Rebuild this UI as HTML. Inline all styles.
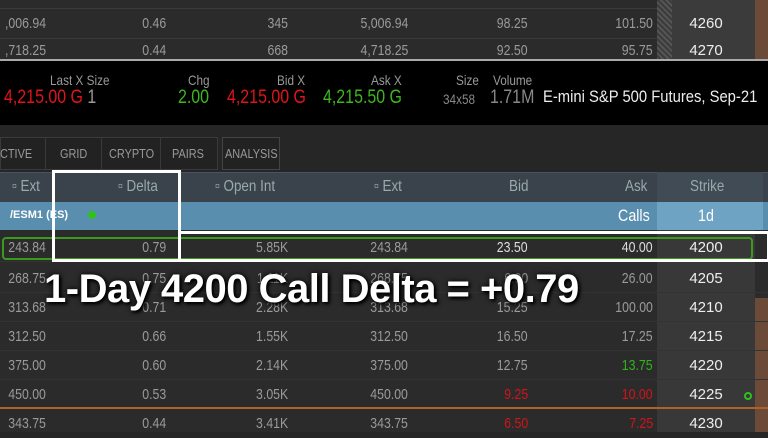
<!DOCTYPE html><html><head><style>
*{margin:0;padding:0;box-sizing:border-box}
body{width:768px;height:432px;background:#262626;position:relative;overflow:hidden;font-family:"Liberation Sans",sans-serif;font-size:13px;color:#9a9a9a}
.a{position:absolute;white-space:nowrap}
.n{transform:scaleX(.84);transform-origin:left top}
.r{position:absolute;left:0;width:768px;height:29px;border-bottom:1px solid #333}
.c{position:absolute;top:0;line-height:29px;text-align:right;font-size:15px;transform:scaleX(.82);transform-origin:right;white-space:nowrap}
.k{position:absolute;left:657px;width:98px;text-align:center;line-height:29px;color:#eee;font-size:15px}
</style></head><body>
<div class="a" style="left:0;top:0;width:768px;height:62px;background:#2b2b2b"></div>
<div class="a" style="left:0;top:8px;width:768px;height:1px;background:#3a3a3a"></div>
<div class="a" style="left:0;top:38px;width:768px;height:1px;background:#3a3a3a"></div>
<div class="a" style="left:657px;top:0;width:106px;height:60px;background:#3b3b3b"></div>
<div class="a" style="left:657px;top:0;width:15px;height:60px;background:repeating-linear-gradient(45deg,#555 0 2px,#3b3b3b 2px 4px)"></div>
<div class="a" style="left:755px;top:0;width:13px;height:60px;background:#6b4a38"></div>
<div class="a" style="left:0;top:59px;width:768px;height:2px;background:#aaa"></div>
<div class="r" style="top:9px;border:0"><div class="c" style="right:722px">,006.94</div><div class="c" style="right:602px">0.46</div><div class="c" style="right:480px">345</div><div class="c" style="right:360px">5,006.94</div><div class="c" style="right:240px">98.25</div><div class="c" style="right:115px">101.50</div><div class="k">4260</div></div>
<div class="r" style="top:38px;height:22px;border:0"><div class="c" style="right:722px;line-height:26px">,718.25</div><div class="c" style="right:602px;line-height:26px">0.44</div><div class="c" style="right:480px;line-height:26px">668</div><div class="c" style="right:360px;line-height:26px">4,718.25</div><div class="c" style="right:240px;line-height:26px">92.50</div><div class="c" style="right:115px;line-height:26px">95.75</div><div class="k" style="line-height:26px">4270</div></div>
<div class="a" style="left:0;top:61px;width:768px;height:64px;background:#000"></div>
<div class="a n" style="left:50px;top:72px;font-size:14px;color:#999">Last X Size</div>
<div class="a n" style="left:188px;top:72px;font-size:14px;color:#999">Chg</div>
<div class="a n" style="left:277px;top:72px;font-size:14px;color:#999">Bid X</div>
<div class="a n" style="left:371px;top:72px;font-size:14px;color:#999">Ask X</div>
<div class="a n" style="left:456px;top:72px;font-size:14px;color:#999">Size</div>
<div class="a n" style="left:493px;top:72px;font-size:14px;color:#999">Volume</div>
<div class="a n" style="left:4px;top:87px;font-size:19px;color:#e0141a">4,215.00 G <span style="color:#999">1</span></div>
<div class="a n" style="left:178px;top:87px;font-size:19px;color:#3cb81e">2.00</div>
<div class="a n" style="left:227px;top:87px;font-size:19px;color:#e0141a">4,215.00 G</div>
<div class="a n" style="left:323px;top:87px;font-size:19px;color:#3cb81e">4,215.50 G</div>
<div class="a n" style="left:443px;top:91px;font-size:14px;color:#888">34x58</div>
<div class="a n" style="left:490px;top:87px;font-size:19px;color:#888">1.71M</div>
<div class="a n" style="left:543px;top:87px;font-size:17px;color:#eee;transform:scaleX(.87)">E-mini S&amp;P 500 Futures, Sep-21</div>
<div class="a" style="left:0;top:137px;width:218px;height:33px;border:1px solid #3a3a3a;background:#222"></div>
<div class="a" style="left:222px;top:137px;width:58px;height:33px;border:1px solid #444;background:#222"></div>
<div class="a n" style="left:0;top:146px;font-size:13px;color:#999">CTIVE</div>
<div class="a" style="left:45px;top:137px;width:1px;height:33px;background:#3a3a3a"></div>
<div class="a n" style="left:60px;top:146px;font-size:13px;color:#999">GRID</div>
<div class="a" style="left:101px;top:137px;width:1px;height:33px;background:#3a3a3a"></div>
<div class="a n" style="left:109px;top:146px;font-size:13px;color:#999">CRYPTO</div>
<div class="a" style="left:160px;top:137px;width:1px;height:33px;background:#3a3a3a"></div>
<div class="a n" style="left:172px;top:146px;font-size:13px;color:#999">PAIRS</div>
<div class="a n" style="left:225px;top:146px;font-size:13px;color:#999">ANALYSIS</div>
<div class="a" style="left:0;top:172px;width:768px;height:30px;background:#3a434c;border-top:1px solid #4a545e"></div>
<div class="a" style="left:657px;top:172px;width:106px;height:30px;background:#414b55"></div>
<div class="a n" style="left:12px;top:178px;font-size:16px;color:#9aa">▫ Ext</div>
<div class="a n" style="left:118px;top:178px;font-size:16px;color:#9aa">▫ Delta</div>
<div class="a n" style="left:215px;top:178px;font-size:16px;color:#9aa">▫ Open Int</div>
<div class="a n" style="left:374px;top:178px;font-size:16px;color:#9aa">▫ Ext</div>
<div class="a n" style="left:509px;top:178px;font-size:16px;color:#9aa">Bid</div>
<div class="a n" style="left:625px;top:178px;font-size:16px;color:#9aa">Ask</div>
<div class="a n" style="left:690px;top:178px;font-size:16px;color:#9aa">Strike</div>
<div class="a" style="left:0;top:202px;width:768px;height:28px;background:#5a8eaf"></div>
<div class="a" style="left:657px;top:202px;width:106px;height:28px;background:#6ea3c3"></div>
<div class="a" style="left:10px;top:209px;font-size:11px;font-weight:bold;color:#fff">/ESM1 (ES)</div>
<div class="a" style="left:88px;top:211px;width:8px;height:8px;border-radius:50%;background:#2fc21c"></div>
<div class="a n" style="left:618px;top:206px;font-size:17px;color:#fff">Calls</div>
<div class="a n" style="left:698px;top:206px;font-size:17px;color:#fff">1d</div>
<div class="a" style="left:0;top:230px;width:768px;height:202px;background:#2b2b2b"></div>
<div class="a" style="left:657px;top:230px;width:98px;height:202px;background:#383838"></div>
<div class="a" style="left:755px;top:298px;width:13px;height:134px;background:#6b4a38"></div>
<div class="r" style="top:233px"><div class="c" style="right:722px">243.84</div><div class="c" style="right:602px">0.79</div><div class="c" style="right:480px">5.85K</div><div class="c" style="right:360px">243.84</div><div class="c" style="right:240px;color:#ddd">23.50</div><div class="c" style="right:115px;color:#ddd">40.00</div><div class="k">4200</div></div>
<div class="r" style="top:264px"><div class="c" style="right:722px">268.75</div><div class="c" style="right:602px">0.75</div><div class="c" style="right:480px">1.11K</div><div class="c" style="right:360px">268.75</div><div class="c" style="right:240px">6.00</div><div class="c" style="right:115px">26.00</div><div class="k">4205</div></div>
<div class="r" style="top:293px"><div class="c" style="right:722px">313.68</div><div class="c" style="right:602px">0.71</div><div class="c" style="right:480px">2.28K</div><div class="c" style="right:360px">313.68</div><div class="c" style="right:240px">15.25</div><div class="c" style="right:115px">100.00</div><div class="k">4210</div></div>
<div class="r" style="top:322px"><div class="c" style="right:722px">312.50</div><div class="c" style="right:602px">0.66</div><div class="c" style="right:480px">1.55K</div><div class="c" style="right:360px">312.50</div><div class="c" style="right:240px">16.50</div><div class="c" style="right:115px">17.25</div><div class="k">4215</div></div>
<div class="r" style="top:351px"><div class="c" style="right:722px">375.00</div><div class="c" style="right:602px">0.60</div><div class="c" style="right:480px">2.14K</div><div class="c" style="right:360px">375.00</div><div class="c" style="right:240px">12.75</div><div class="c" style="right:115px;color:#2fb51a">13.75</div><div class="k">4220</div></div>
<div class="r" style="top:380px;border:0"><div class="c" style="right:722px">450.00</div><div class="c" style="right:602px">0.53</div><div class="c" style="right:480px">3.05K</div><div class="c" style="right:360px">450.00</div><div class="c" style="right:240px;color:#d0141a">9.25</div><div class="c" style="right:115px;color:#d0141a">10.00</div><div class="k">4225</div></div>
<div class="a" style="left:0;top:407px;width:768px;height:2px;background:#b0602a"></div>
<div class="r" style="top:409px;border:0"><div class="c" style="right:722px">343.75</div><div class="c" style="right:602px">0.44</div><div class="c" style="right:480px">3.41K</div><div class="c" style="right:360px">343.75</div><div class="c" style="right:240px;color:#d0141a">6.50</div><div class="c" style="right:115px;color:#d0141a">7.25</div><div class="k">4230</div></div>
<div class="a" style="left:744px;top:392px;width:8px;height:8px;border:2px solid #2fc21c;border-radius:50%"></div>
<div class="a" style="left:2px;top:237px;width:751px;height:23px;border:2px solid #3a9a1e;border-radius:4px"></div>
<div class="a" style="left:52px;top:170px;width:129px;height:92px;border:3px solid #fff"></div>
<div class="a" style="left:180px;top:231px;width:590px;height:31px;border:3px solid #fff;border-left:0"></div>
<div class="a" style="left:44px;top:267px;font-size:40px;font-weight:bold;color:#fff;text-shadow:0 0 6px #000,2px 2px 3px #000;letter-spacing:-0.5px">1-Day 4200 Call Delta = +0.79</div>
</body></html>
